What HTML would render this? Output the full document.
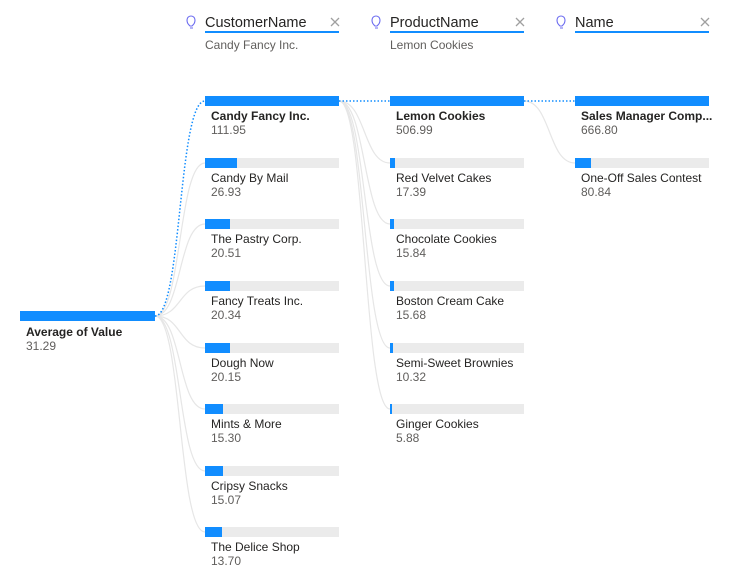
<!DOCTYPE html><html><head><meta charset="utf-8"><style>
body{margin:0;background:#fff;width:737px;height:574px;overflow:hidden}
svg{display:block;font-family:"Segoe UI","Liberation Sans",sans-serif}
.l{font-size:12px;fill:#252423}.b{font-weight:bold}.v{font-size:12px;fill:#605e5c}
.h{font-size:14.5px;fill:#252423}.s{font-size:12px;fill:#605e5c}
</style></head><body>
<svg width="737" height="574" viewBox="0 0 737 574">
<g fill="none" stroke="#e6e6e6" stroke-width="1.2">
<path d="M155 316C182 316 178 163 205 163"/><path d="M155 316C182 316 178 224 205 224"/><path d="M155 316C182 316 178 286 205 286"/><path d="M155 316C182 316 178 348 205 348"/><path d="M155 316C182 316 178 409 205 409"/><path d="M155 316C182 316 178 471 205 471"/><path d="M155 316C182 316 178 532 205 532"/>
<path d="M339 101C366 101 363 163 390 163"/><path d="M339 101C366 101 363 224 390 224"/><path d="M339 101C366 101 363 286 390 286"/><path d="M339 101C366 101 363 348 390 348"/><path d="M339 101C366 101 363 409 390 409"/>
<path d="M524 101C551 101 548 163 575 163"/>
</g>
<g fill="none" stroke="#118dff" stroke-width="1.5" stroke-dasharray="1.5 2">
<path d="M155 316C182 316 178 101 205 101"/><path d="M339 101H390"/><path d="M524 101H575"/>
</g>
<g fill="#118dff"><rect x="205" y="31" width="134" height="2"/><rect x="390" y="31" width="134" height="2"/><rect x="575" y="31" width="134" height="2"/></g>
<g fill="none" stroke="#6b6bf0" stroke-width="1.1">
<path d="M190 26c-2-2-3-3-3-6a4 4 0 0 1 8 0c0 3-1 4-3 6zM190 28h3"/>
<path d="M375 26c-2-2-3-3-3-6a4 4 0 0 1 8 0c0 3-1 4-3 6zM375 28h3"/>
<path d="M560 26c-2-2-3-3-3-6a4 4 0 0 1 8 0c0 3-1 4-3 6zM560 28h3"/>
</g>
<g stroke="#a0a0a0" stroke-width="1.3"><path d="M331 18l8 8M339 18l-8 8M516 18l8 8M524 18l-8 8M701 18l8 8M709 18l-8 8"/></g>
<text class="h" x="205" y="27">CustomerName</text><text class="h" x="390" y="27">ProductName</text><text class="h" x="575" y="27">Name</text>
<text class="s" x="205" y="49">Candy Fancy Inc.</text><text class="s" x="390" y="49">Lemon Cookies</text>
<g fill="#ebebeb">
<rect x="205" y="158" width="134" height="10"/><rect x="205" y="219" width="134" height="10"/><rect x="205" y="281" width="134" height="10"/><rect x="205" y="343" width="134" height="10"/><rect x="205" y="404" width="134" height="10"/><rect x="205" y="466" width="134" height="10"/><rect x="205" y="527" width="134" height="10"/>
<rect x="390" y="158" width="134" height="10"/><rect x="390" y="219" width="134" height="10"/><rect x="390" y="281" width="134" height="10"/><rect x="390" y="343" width="134" height="10"/><rect x="390" y="404" width="134" height="10"/>
<rect x="575" y="158" width="134" height="10"/>
</g>
<g fill="#118dff">
<rect x="20" y="311" width="135" height="10"/>
<rect x="205" y="96" width="134" height="10"/><rect x="205" y="158" width="32" height="10"/><rect x="205" y="219" width="25" height="10"/><rect x="205" y="281" width="25" height="10"/><rect x="205" y="343" width="25" height="10"/><rect x="205" y="404" width="18" height="10"/><rect x="205" y="466" width="18" height="10"/><rect x="205" y="527" width="17" height="10"/>
<rect x="390" y="96" width="134" height="10"/><rect x="390" y="158" width="5" height="10"/><rect x="390" y="219" width="4" height="10"/><rect x="390" y="281" width="4" height="10"/><rect x="390" y="343" width="3" height="10"/><rect x="390" y="404" width="2" height="10"/>
<rect x="575" y="96" width="134" height="10"/><rect x="575" y="158" width="16" height="10"/>
</g>
<text class="l b" x="26" y="336">Average of Value</text><text class="v" x="26" y="350">31.29</text>
<text class="l b" x="211" y="120">Candy Fancy Inc.</text><text class="v" x="211" y="134">111.95</text>
<text class="l" x="211" y="182">Candy By Mail</text><text class="v" x="211" y="196">26.93</text>
<text class="l" x="211" y="243">The Pastry Corp.</text><text class="v" x="211" y="257">20.51</text>
<text class="l" x="211" y="305">Fancy Treats Inc.</text><text class="v" x="211" y="319">20.34</text>
<text class="l" x="211" y="367">Dough Now</text><text class="v" x="211" y="381">20.15</text>
<text class="l" x="211" y="428">Mints &amp; More</text><text class="v" x="211" y="442">15.30</text>
<text class="l" x="211" y="490">Cripsy Snacks</text><text class="v" x="211" y="504">15.07</text>
<text class="l" x="211" y="551">The Delice Shop</text><text class="v" x="211" y="565">13.70</text>
<text class="l b" x="396" y="120">Lemon Cookies</text><text class="v" x="396" y="134">506.99</text>
<text class="l" x="396" y="182">Red Velvet Cakes</text><text class="v" x="396" y="196">17.39</text>
<text class="l" x="396" y="243">Chocolate Cookies</text><text class="v" x="396" y="257">15.84</text>
<text class="l" x="396" y="305">Boston Cream Cake</text><text class="v" x="396" y="319">15.68</text>
<text class="l" x="396" y="367">Semi-Sweet Brownies</text><text class="v" x="396" y="381">10.32</text>
<text class="l" x="396" y="428">Ginger Cookies</text><text class="v" x="396" y="442">5.88</text>
<text class="l b" x="581" y="120">Sales Manager Comp...</text><text class="v" x="581" y="134">666.80</text>
<text class="l" x="581" y="182">One-Off Sales Contest</text><text class="v" x="581" y="196">80.84</text>
</svg></body></html>
